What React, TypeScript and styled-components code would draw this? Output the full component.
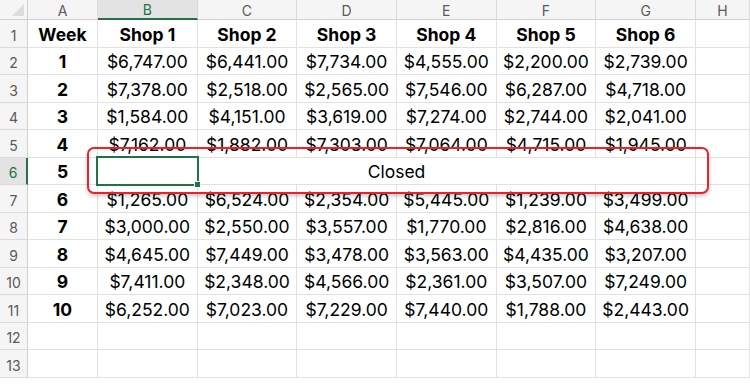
import { Fragment } from "react"
import styled, { createGlobalStyle } from "styled-components"

const GlobalStyle = createGlobalStyle`
  html, body {
    margin: 0;
    padding: 0;
    background: #ffffff;
    overflow: hidden;
  }
`

const Sheet = styled.div`
  position: relative;
  display: grid;
  grid-template-columns: 28px 70px repeat(6, 99.67px) 1fr;
  grid-template-rows: 20px repeat(13, 27.5px);
  width: 750px;
  height: 386px;
  font-family: Inter, "Liberation Sans", sans-serif;
  color: #000000;
  overflow: hidden;
`

const Corner = styled.div`
  position: relative;
  background: #f5f5f5;
  border-right: 1px solid #d0d0d0;
  border-bottom: 1px solid #d0d0d0;
  box-sizing: border-box;

  &::after {
    content: "";
    position: absolute;
    right: 3px;
    bottom: 3px;
    width: 12px;
    height: 12px;
    background: #dcdcdc;
    clip-path: polygon(100% 0, 100% 100%, 0 100%);
  }
`

const ColHeader = styled.div<{ $selected?: boolean }>`
  display: flex;
  align-items: center;
  justify-content: center;
  padding-top: 1px;
  box-sizing: border-box;
  font-size: 14px;
  color: ${(p) => (p.$selected ? "#217346" : "#5a5a5a")};
  background: ${(p) => (p.$selected ? "#e3e3e3" : "#f5f5f5")};
  border-right: 1px solid #dadada;
  border-bottom: ${(p) => (p.$selected ? "2px solid #217346" : "1px solid #d0d0d0")};
`

const RowHeader = styled.div<{ $selected?: boolean }>`
  display: flex;
  align-items: center;
  justify-content: center;
  padding-top: 4px;
  box-sizing: border-box;
  font-size: 14px;
  color: ${(p) => (p.$selected ? "#217346" : "#5a5a5a")};
  background: ${(p) => (p.$selected ? "#e3e3e3" : "#f5f5f5")};
  border-bottom: 1px solid #dadada;
  border-right: ${(p) => (p.$selected ? "2px solid #217346" : "1px solid #d0d0d0")};
`

const Cell = styled.div<{ $bold?: boolean }>`
  display: flex;
  align-items: center;
  justify-content: center;
  padding-top: 2px;
  box-sizing: border-box;
  font-size: 17.5px;
  font-weight: ${(p) => (p.$bold ? 700 : 400)};
  white-space: nowrap;
  border-right: 1px solid #e1e1e1;
  border-bottom: 1px solid #e1e1e1;
`

const MergedCell = styled(Cell)`
  position: relative;
  grid-column: 3 / 9;
`

const Selection = styled.div`
  position: absolute;
  left: -2px;
  top: -2px;
  width: 103px;
  height: 30px;
  box-sizing: border-box;
  border: 2px solid #217346;
`

const FillHandle = styled.div`
  position: absolute;
  right: -4px;
  bottom: -4px;
  width: 5px;
  height: 5px;
  background: #217346;
  border: 1px solid #ffffff;
`

const Callout = styled.div`
  position: absolute;
  left: 87px;
  top: 147px;
  width: 622px;
  height: 47px;
  box-sizing: border-box;
  border: 2px solid #e8232a;
  border-radius: 7px;
  box-shadow: 0 2px 4px rgba(0, 0, 0, 0.22);
  pointer-events: none;
`

const columns = ["A", "B", "C", "D", "E", "F", "G", "H"]
const shops = ["Shop 1", "Shop 2", "Shop 3", "Shop 4", "Shop 5", "Shop 6"]

const weeks: (number[] | null)[] = [
  [6747, 6441, 7734, 4555, 2200, 2739],
  [7378, 2518, 2565, 7546, 6287, 4718],
  [1584, 4151, 3619, 7274, 2744, 2041],
  [7162, 1882, 7303, 7064, 4715, 1945],
  null,
  [1265, 6524, 2354, 5445, 1239, 3499],
  [3000, 2550, 3557, 1770, 2816, 4638],
  [4645, 7449, 3478, 3563, 4435, 3207],
  [7411, 2348, 4566, 2361, 3507, 7249],
  [6252, 7023, 7229, 7440, 1788, 2443],
]

const money = (n: number) =>
  "$" + n.toLocaleString("en-US", { minimumFractionDigits: 2, maximumFractionDigits: 2 })

function App() {
  return (
    <>
      <GlobalStyle />
      <Sheet>
        <Corner />
        {columns.map((c) => (
          <ColHeader key={c} $selected={c === "B"}>
            {c}
          </ColHeader>
        ))}

        <RowHeader>1</RowHeader>
        <Cell $bold>Week</Cell>
        {shops.map((s) => (
          <Cell key={s} $bold>
            {s}
          </Cell>
        ))}
        <Cell />

        {weeks.map((values, i) => (
          <Fragment key={i}>
            <RowHeader $selected={values === null}>{i + 2}</RowHeader>
            <Cell $bold>{i + 1}</Cell>
            {values ? (
              values.map((v, j) => <Cell key={j}>{money(v)}</Cell>)
            ) : (
              <MergedCell>
                Closed
                <Selection>
                  <FillHandle />
                </Selection>
              </MergedCell>
            )}
            <Cell />
          </Fragment>
        ))}

        {[12, 13].map((r) => (
          <Fragment key={r}>
            <RowHeader>{r}</RowHeader>
            {columns.map((c) => (
              <Cell key={c} />
            ))}
          </Fragment>
        ))}

        <Callout />
      </Sheet>
    </>
  )
}

export default App
